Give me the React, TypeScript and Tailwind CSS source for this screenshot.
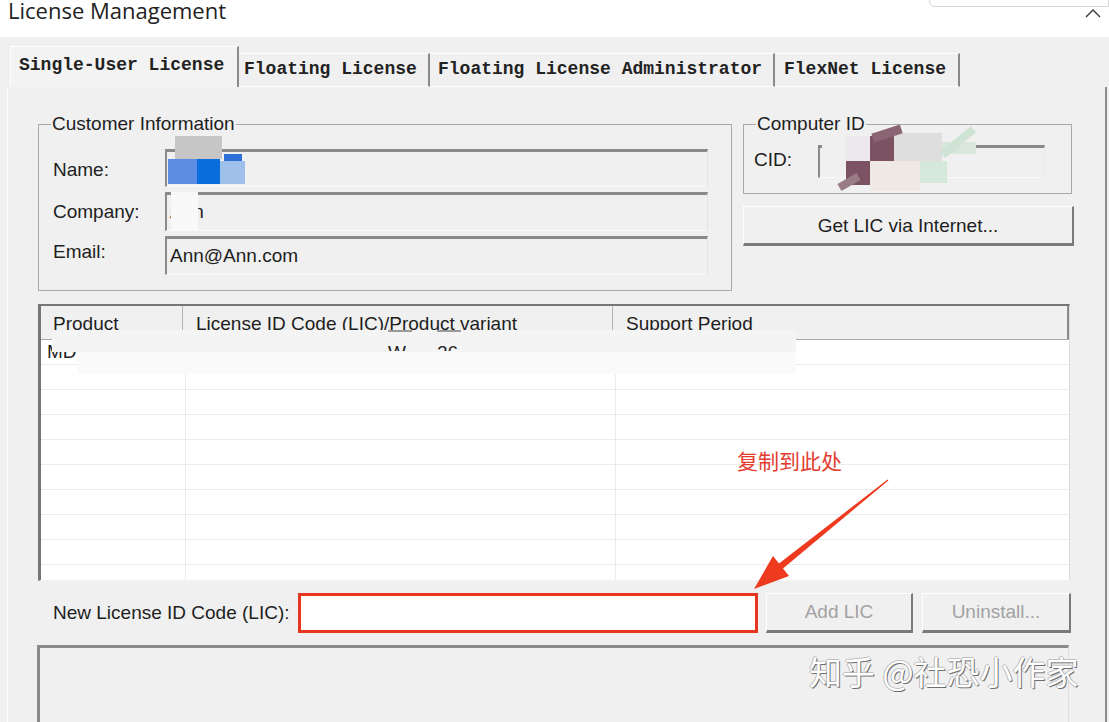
import React from 'react'

const tabs = [
    { label: 'Floating License', w: 'w-[191px]', pl: 'pl-[5px]' },
    { label: 'Floating License Administrator', w: 'w-[345px]', pl: 'pl-[8px]' },
    { label: 'FlexNet License', w: 'w-[185px]', pl: 'pl-[9px]' },
]

const App = () => {
    const rows = Array.from({ length: 10 })

    return (
        <div className="relative w-[1109px] h-[722px] overflow-hidden bg-[#f0f0f0] font-['Liberation_Sans',Arial,sans-serif] text-[#1e1e1e]">
            {/* barre de titre */}
            <div className="relative h-[37px] bg-white">
                <div className="pl-[8px] font-['Open_Sans',sans-serif] text-[22px] leading-[20px] text-[#222]">
                    License Management
                </div>
                <div className="absolute right-0 top-[-6px] h-[13px] w-[180px] rounded-bl-[6px] border border-[#d6d6d6] bg-white" />
                <svg
                    className="absolute left-[1084px] top-[7px]"
                    width="18"
                    height="12"
                    viewBox="0 0 18 12"
                >
                    <polyline
                        points="2,10 9,3 16,10"
                        fill="none"
                        stroke="#333"
                        strokeWidth="1.3"
                    />
                </svg>
            </div>

            {/* onglets */}
            <div className="flex h-[50px] items-end pl-[10px] font-['Liberation_Mono',monospace] text-[18px] font-bold text-[#222]">
                <div className="flex h-[41px] w-[229px] items-start border-l border-t border-white border-r-2 border-r-[#8a8a8a] pl-[8px] pt-[8px] leading-[20px] bg-[#f3f3f3]">
                    Single-User License
                </div>
                {tabs.map((t, i) => (
                    <div
                        key={i}
                        className={`flex h-[34px] ${t.w} ${t.pl} items-start border-t border-white border-r-2 border-r-[#8a8a8a] border-b border-b-white pt-[5px] leading-[20px]`}
                    >
                        {t.label}
                    </div>
                ))}
            </div>

            {/* panneau principal */}
            <div className="ml-[7px] h-[640px] w-[1100px] border-l border-white border-r-2 border-r-[#8c8c8c] pl-[30px] text-[19px]">
                <div className="flex items-start pt-[27px]">
                    {/* Customer Information */}
                    <fieldset className="h-[177px] w-[694px] border border-[#a9a9a9] pl-[14px]">
                        <legend className="ml-[-2px] px-[1px] leading-[20px]">
                            Customer Information
                        </legend>
                        <div className="mt-[15px] flex flex-col gap-[5px]">
                            <div className="flex h-[38px] items-center">
                                <span className="mt-[4px] w-[112px]">Name:</span>
                                <div className="relative h-[38px] w-[543px] border-t-[3px] border-l-[2px] border-[#8a8a8a] border-r border-b border-r-[#e4e4e4] border-b-[#f8f8f8]">
                                    <div className="absolute left-[8px] top-[-16px] h-[23px] w-[47px] bg-[#c6c6c6]" />
                                    <div className="absolute left-[57px] top-[2px] h-[7px] w-[18px] bg-[#2c6fd8]" />
                                    <div className="absolute left-[1px] top-[7px] h-[25px] w-[29px] bg-[#5b8ee2]" />
                                    <div className="absolute left-[30px] top-[7px] h-[25px] w-[23px] bg-[#0a6fdc]" />
                                    <div className="absolute left-[53px] top-[9px] h-[23px] w-[25px] bg-[#9fc0ea]" />
                                </div>
                            </div>
                            <div className="flex h-[39px] items-center">
                                <span className="mt-[2px] w-[112px]">Company:</span>
                                <div className="relative flex h-[39px] w-[543px] items-center border-t-[3px] border-l-[2px] border-[#8a8a8a] border-r border-b border-r-[#e4e4e4] border-b-[#f8f8f8] pl-[3px]">
                                    Ann
                                    <div className="absolute left-[4px] top-[-3px] h-[39px] w-[27px] bg-[#f9f9f9]" />
                                </div>
                            </div>
                            <div className="flex h-[39px] items-center">
                                <span className="mt-[-6px] w-[112px]">Email:</span>
                                <div className="flex h-[39px] w-[543px] items-center border-t-[3px] border-l-[2px] border-[#8a8a8a] border-r border-b border-r-[#e4e4e4] border-b-[#f8f8f8] pl-[3px]">
                                    Ann@Ann.com
                                </div>
                            </div>
                        </div>
                    </fieldset>

                    {/* colonne de droite */}
                    <div className="ml-[11px] mt-[0px] flex w-[331px] flex-col">
                        <fieldset className="h-[80px] w-[329px] border border-[#a9a9a9] pl-[10px]">
                            <legend className="ml-[2px] px-[1px] leading-[20px]">
                                Computer ID
                            </legend>
                            <div className="mt-[11px] flex items-center">
                                <span className="w-[64px] mt-[-2px]">CID:</span>
                                <div className="relative h-[33px] w-[227px] border-t-[3px] border-l-[2px] border-[#8a8a8a] border-r border-b border-r-[#e8e8e8] border-b-[#f8f8f8]">
                                    <div className="absolute left-[2px] top-[-4px] h-[10px] w-[152px] bg-[#f0f0f0]" />
                                    <div className="absolute left-[96px] top-[-6px] h-[12px] w-[60px] bg-[#d8e6dc]" />
                                    <div className="absolute left-[74px] top-[-15px] h-[30px] w-[48px] bg-[#dedede]" />
                                    <div className="absolute left-[26px] top-[-12px] h-[25px] w-[24px] bg-[#ece8ee]" />
                                    <div className="absolute left-[50px] top-[-12px] h-[25px] w-[24px] bg-[#7c5263]" />
                                    <div className="absolute left-[52px] top-[-19px] h-[9px] w-[30px] -rotate-[18deg] bg-[#8a6473]" />
                                    <div className="absolute left-[26px] top-[13px] h-[24px] w-[24px] bg-[#7c5263]" />
                                    <div className="absolute left-[18px] top-[30px] h-[8px] w-[22px] -rotate-[30deg] bg-[#9a7c86]" />
                                    <div className="absolute left-[50px] top-[13px] h-[30px] w-[50px] bg-[#efe9e4]" />
                                    <div className="absolute left-[100px] top-[13px] h-[22px] w-[27px] bg-[#d6e8da]" />
                                    <div className="absolute left-[118px] top-[-10px] h-[8px] w-[40px] -rotate-[40deg] bg-[#cfe3d4]" />
                                </div>
                            </div>
                        </fieldset>
                        <button className="mt-[12px] h-[40px] w-[331px] border-l border-t border-white border-r-2 border-b-[3px] border-r-[#7a7a7a] border-b-[#7a7a7a] bg-[#f0f0f0] pt-[2px] text-center">
                            Get LIC via Internet...
                        </button>
                    </div>
                </div>

                {/* liste des licences */}
                <div className="relative mt-[13px] h-[277px] w-[1032px] overflow-hidden border-t-2 border-l-[3px] border-[#767676] border-r border-r-[#dcdcdc] border-b border-b-[#f4f4f4] bg-white">
                    <div className="flex h-[34px] border-b border-[#a8a8a8] bg-[#f0f0f0]">
                        <div className="w-[142px] border-r border-[#b4b4b4] pl-[12px] pt-[4px]">
                            Product
                        </div>
                        <div className="w-[430px] border-r border-[#b4b4b4] pl-[13px] pt-[4px]">
                            License ID Code (LIC)/Product variant
                        </div>
                        <div className="flex-1 border-r-2 border-[#8a8a8a] pl-[13px] pt-[4px]">
                            Support Period
                        </div>
                    </div>
                    {rows.map((_, i) => (
                        <div key={i} className="flex h-[25px] border-b border-[#ebebeb]">
                            <div className="w-[145px] border-r border-[#ececec] pl-[6px] leading-[24px]">
                                {i === 0 ? 'MD' : ''}
                            </div>
                            <div className="w-[430px] border-r border-[#ececec]" />
                            <div className="flex-1" />
                        </div>
                    ))}
                    {/* zones masquées */}
                    <div className="absolute left-[11px] top-[24px] h-[22px] w-[744px] bg-[#f4f4f4]" />
                    <div className="absolute left-[36px] top-[46px] h-[22px] w-[719px] bg-[#fafafa]" />
                    <div className="absolute left-[347px] top-[24px] h-[2px] w-[24px] bg-[#9a9a9a]" />
                    <div className="absolute left-[396px] top-[24px] h-[2px] w-[24px] bg-[#9a9a9a]" />
                    <div className="absolute left-[347px] top-[36px] h-[9px] overflow-hidden leading-[22px]">
                        W
                    </div>
                    <div className="absolute left-[396px] top-[36px] h-[9px] overflow-hidden leading-[22px]">
                        26
                    </div>
                </div>

                {/* nouveau code */}
                <div className="mt-[12px] flex h-[40px] items-center">
                    <span className="w-[260px] pl-[15px]">New License ID Code (LIC):</span>
                    <div className="h-[40px] w-[460px] border-[3px] border-[#e8351f] bg-white" />
                    <button className="ml-[8px] h-[40px] w-[147px] border-l border-t border-white border-r-2 border-b-[3px] border-r-[#7a7a7a] border-b-[#7a7a7a] text-[#a2a2a2]">
                        Add LIC
                    </button>
                    <button className="ml-[9px] h-[40px] w-[149px] border-l border-t border-white border-r-2 border-b-[3px] border-r-[#7a7a7a] border-b-[#7a7a7a] text-[#a2a2a2]">
                        Uninstall...
                    </button>
                </div>

                {/* zone de messages */}
                <div className="ml-[-1px] mt-[12px] h-[100px] w-[1032px] border-t-[3px] border-l-[3px] border-[#8a8a8a] border-r border-r-[#e0e0e0]" />
            </div>

            {/* annotation */}
            <div className="absolute left-[737px] top-[447px] font-['Noto_Sans_CJK_SC',sans-serif] text-[21px] leading-[26px] text-[#e33b2e]">
                复制到此处
            </div>
            <svg
                className="absolute left-0 top-0"
                width="1109"
                height="722"
                viewBox="0 0 1109 722"
            >
                <polygon
                    points="888.4,480.5 783,568.5 789,576 754,589 773,556 779,563.5 887.6,479.5"
                    fill="#ee3a1f"
                />
            </svg>

            {/* filigrane */}
            <div className="absolute left-[809px] top-[650px] font-['Noto_Sans_CJK_SC',sans-serif] text-[33px] leading-[42px] text-white [text-shadow:1px_1px_0_#6f6f6f,-1px_0_0_#b8b8b8,0_-1px_0_#c0c0c0]">
                知乎 @社恐小作家
            </div>
        </div>
    )
}

export default App
